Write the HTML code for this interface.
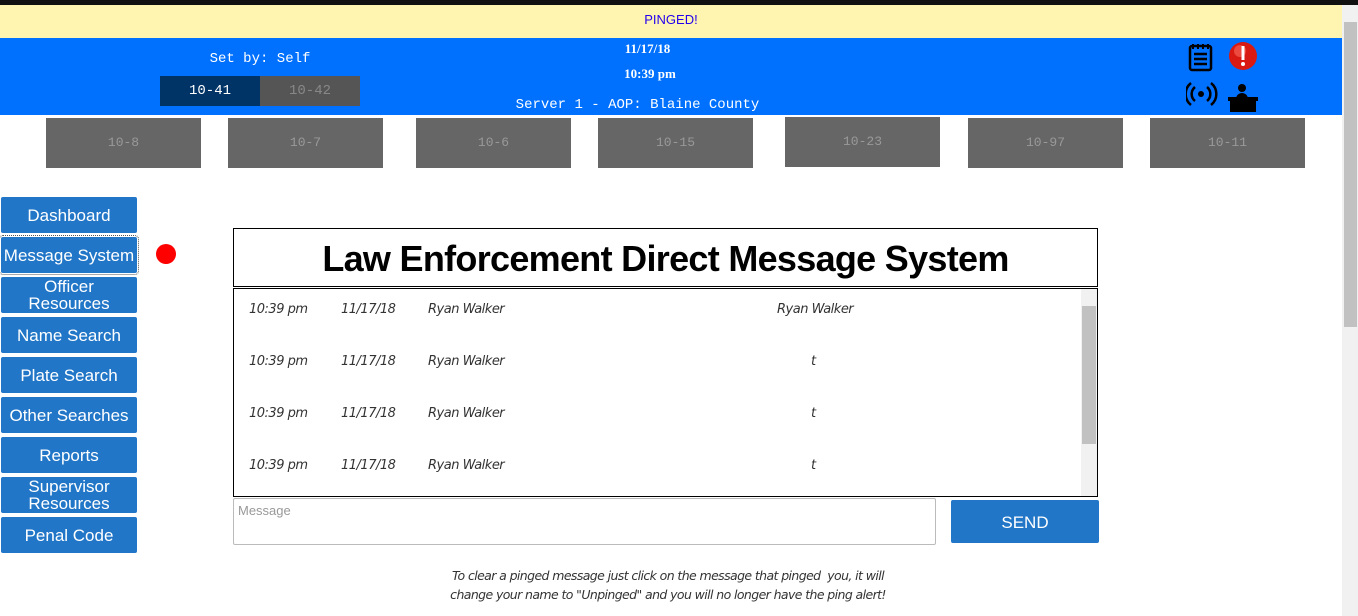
<!DOCTYPE html>
<html><head><style>
body{margin:0;width:1358px;height:616px;overflow:hidden;background:#fff;font-family:"Liberation Sans",sans-serif;position:relative}
.a{position:absolute}
.st{position:absolute;width:155px;height:50px;background:#666;color:#999;font-family:"Liberation Mono",monospace;font-size:13px;text-align:center;line-height:50px}
.nb{position:absolute;left:1px;width:136px;height:36px;background:#2176c7;color:#fff;font-size:17px;text-align:center;border-radius:2px;display:flex;align-items:center;justify-content:center;line-height:17px}
.row{position:absolute;left:249px;font-family:"DejaVu Sans",cursive;font-style:italic;font-size:13px;color:#333;letter-spacing:-0.5px}
</style></head><body>
<div class="a" style="left:0;top:0;width:1358px;height:5px;background:#111"></div>
<div class="a" style="left:0;top:5px;width:1342px;height:33px;background:#fff5b1;text-align:center;line-height:30px;font-size:13px;color:#2200ee">PINGED!</div>
<div class="a" style="left:0;top:38px;width:1342px;height:77px;background:#0070ff"></div>
<div class="a" style="left:160px;top:51px;width:200px;text-align:center;color:#fff;font-family:'Liberation Mono',monospace;font-size:14px">Set by: Self</div>
<div class="a" style="left:160px;top:76px;width:100px;height:30px;background:#003366;color:#fff;font-family:'Liberation Mono',monospace;font-size:14px;text-align:center;line-height:30px">10-41</div>
<div class="a" style="left:260px;top:76px;width:100px;height:30px;background:#555;color:#888;font-family:'Liberation Mono',monospace;font-size:14px;text-align:center;line-height:30px">10-42</div>
<div class="a" style="left:600px;top:41px;width:95px;text-align:center;color:#fff;font-family:'Liberation Serif',serif;font-weight:bold;font-size:13px">11/17/18</div>
<div class="a" style="left:600px;top:66px;width:100px;text-align:center;color:#fff;font-family:'Liberation Serif',serif;font-weight:bold;font-size:13px">10:39 pm</div>
<div class="a" style="left:500px;top:97px;width:275px;text-align:center;color:#fff;font-family:'Liberation Mono',monospace;font-size:14px">Server 1 - AOP: Blaine County</div>
<svg class="a" style="left:1186px;top:42px" width="80" height="72">
<rect x="4" y="4" width="21" height="24" rx="2" fill="none" stroke="#000" stroke-width="2.5"/>
<path d="M7 2v5M12 2v5M17 2v5M22 2v5" stroke="#000" stroke-width="2"/>
<path d="M8 12h13M8 17h13M8 22h13" stroke="#000" stroke-width="2.5"/>
<circle cx="57" cy="14" r="14" fill="#d81a12"/><circle cx="54" cy="9" r="6" fill="#ff7a6a" opacity=".5"/>
<rect x="55.5" y="4" width="3" height="14" fill="#fff"/><circle cx="57" cy="22" r="2" fill="#fff"/>
<circle cx="15" cy="52" r="3" fill="#000"/>
<path d="M9 45a9 9 0 0 0 0 14M21 45a9 9 0 0 1 0 14M5 41a14 14 0 0 0 0 22M25 41a14 14 0 0 1 0 22" stroke="#000" stroke-width="2.5" fill="none"/>
<circle cx="56" cy="46" r="4" fill="#000"/><path d="M50 57a6 6 0 0 1 12 0z" fill="#000"/>
<rect x="42" y="55" width="30" height="4" fill="#000"/><rect x="44" y="59" width="26" height="11" fill="#000"/>
</svg>
<div class="a" style="left:1342px;top:5px;width:16px;height:611px;background:#f1f1f1"></div>
<div class="a" style="left:1344px;top:22px;width:13px;height:305px;background:#c1c1c1"></div>
<div class="st" style="left:46px;top:118px">10-8</div>
<div class="st" style="left:228px;top:118px">10-7</div>
<div class="st" style="left:416px;top:118px">10-6</div>
<div class="st" style="left:598px;top:118px">10-15</div>
<div class="st" style="left:785px;top:117px">10-23</div>
<div class="st" style="left:968px;top:118px">10-97</div>
<div class="st" style="left:1150px;top:118px">10-11</div>
<div class="nb" style="top:197px">Dashboard</div>
<div class="nb" style="top:237px;outline:1px dotted #555;outline-offset:1px">Message System</div>
<div class="nb" style="top:277px">Officer<br>Resources</div>
<div class="nb" style="top:317px">Name Search</div>
<div class="nb" style="top:357px">Plate Search</div>
<div class="nb" style="top:397px">Other Searches</div>
<div class="nb" style="top:437px">Reports</div>
<div class="nb" style="top:477px">Supervisor<br>Resources</div>
<div class="nb" style="top:517px">Penal Code</div>
<div class="a" style="left:156px;top:244px;width:20px;height:20px;border-radius:50%;background:#f00"></div>
<div class="a" style="left:233px;top:228px;width:863px;height:57px;border:1px solid #000;text-align:center;font-size:36px;font-weight:bold;line-height:59px;letter-spacing:-0.7px">Law Enforcement Direct Message System</div>
<div class="a" style="left:233px;top:288px;width:863px;height:207px;border:1px solid #000"></div>
<div class="a" style="left:1081px;top:289px;width:16px;height:207px;background:#f1f1f1"></div>
<div class="a" style="left:1082px;top:306px;width:14px;height:138px;background:#c1c1c1"></div>
<div class="row" style="top:302px">10:39 pm</div><div class="row" style="top:302px;left:341px">11/17/18</div><div class="row" style="top:302px;left:428px">Ryan Walker</div><div class="row" style="top:302px;left:777px">Ryan Walker</div>
<div class="row" style="top:354px">10:39 pm</div><div class="row" style="top:354px;left:341px">11/17/18</div><div class="row" style="top:354px;left:428px">Ryan Walker</div><div class="row" style="top:354px;left:811px">t</div>
<div class="row" style="top:406px">10:39 pm</div><div class="row" style="top:406px;left:341px">11/17/18</div><div class="row" style="top:406px;left:428px">Ryan Walker</div><div class="row" style="top:406px;left:811px">t</div>
<div class="row" style="top:458px">10:39 pm</div><div class="row" style="top:458px;left:341px">11/17/18</div><div class="row" style="top:458px;left:428px">Ryan Walker</div><div class="row" style="top:458px;left:811px">t</div>
<div class="a" style="left:233px;top:498px;border:1px solid #bbb;border-radius:2px;color:#999;font-size:13px;padding:4px;box-sizing:border-box;width:703px;height:47px">Message</div>
<div class="a" style="left:951px;top:500px;width:148px;height:43px;background:#2176c7;color:#fff;font-size:17px;text-align:center;line-height:45px;border-radius:2px">SEND</div>
<div class="a" style="left:408px;top:566px;width:520px;text-align:center;font-family:'DejaVu Sans',cursive;font-style:italic;font-size:12.5px;color:#333;line-height:19px;letter-spacing:-0.6px">To clear a pinged message just click on the message that pinged &nbsp;you, it will<br>change your name to "Unpinged" and you will no longer have the ping alert!</div>
</body></html>
